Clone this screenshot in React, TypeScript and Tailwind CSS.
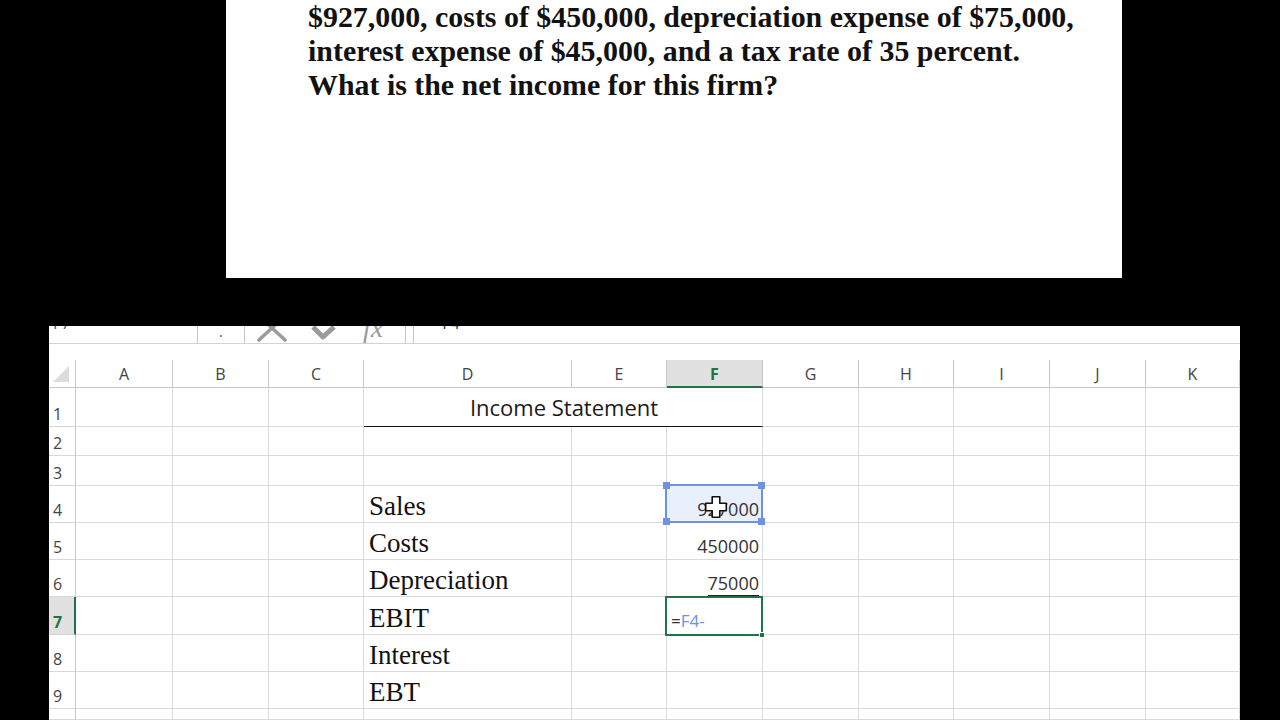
import React from 'react';

const COLS = ['A', 'B', 'C', 'D', 'E', 'F', 'G', 'H', 'I', 'J', 'K'];
const ROWS = [1, 2, 3, 4, 5, 6, 7, 8, 9, 10];

const LABELS: Record<number, string> = {
  4: 'Sales',
  5: 'Costs',
  6: 'Depreciation',
  7: 'EBIT',
  8: 'Interest',
  9: 'EBT',
};

const ui = { fontFamily: '"Open Sans", "Liberation Sans", sans-serif' };
const serif = { fontFamily: '"Liberation Serif", "Times New Roman", serif' };

function MoveCursor() {
  return (
    <svg width="26" height="26" viewBox="0 0 24 24" className="absolute left-[36px] top-[8px]">
      <path
        d="M8.5 2.5h7v6h6v7h-6v6h-7v-6h-6v-7h6z"
        fill="#fff"
        stroke="#111"
        strokeWidth="1.5"
        strokeLinejoin="round"
      />
    </svg>
  );
}

function FormulaBar() {
  return (
    <div className="flex h-[18px] border-b border-[#d2d2d2]" style={ui}>
      <div className="w-[149px] border-r border-[#c6c6c6] pl-[4px]">
        <div className="-mt-[11px] text-[16px] leading-[16px] text-[#555]">F7</div>
      </div>
      <div className="w-[46px] flex justify-center">
        <div className="mt-[9px] w-[2px] h-[2px] bg-[#888]" />
      </div>
      <div className="w-[162px] border-l border-r border-[#c6c6c6] flex items-end">
        <svg width="162" height="30" viewBox="0 0 162 30" className="-mb-[1px] shrink-0 self-end">
          <path d="M14 2 L40 26 M40 2 L14 26" stroke="#9a9a9a" strokeWidth="3.5" strokeLinecap="round" />
          <path d="M68 13 L78 23 L89 13" stroke="#9a9a9a" strokeWidth="5" fill="none" strokeLinejoin="round" />
          <text x="118" y="23" fontSize="28" fontStyle="italic" fill="#9a9a9a" fontFamily="Liberation Serif, serif">
            fx
          </text>
        </svg>
      </div>
      <div className="w-[7px]" />
      <div className="flex-1 border-l border-[#c6c6c6] pl-[19px]">
        <div className="-mt-[11px] text-[16px] leading-[16px] text-[#333]">=F4-</div>
      </div>
    </div>
  );
}

function HeaderRow() {
  return (
    <>
      <div className="border-r border-b border-[#c8c8c8] flex items-end justify-end pr-[6px] pb-[5px]">
        <svg width="16" height="16" viewBox="0 0 16 16">
          <path d="M16 0 L16 16 L0 16 Z" fill="#dcdcdc" />
        </svg>
      </div>
      {COLS.map((c) =>
        c === 'F' ? (
          <div
            key={c}
            className="bg-[#e1e1e1] border-r border-[#c8c8c8] border-b-2 border-b-[#217346] flex items-end justify-center pb-[4px] text-[16px] leading-[16px] font-bold text-[#217346]"
          >
            {c}
          </div>
        ) : (
          <div
            key={c}
            className="border-r border-b border-[#c8c8c8] flex items-end justify-center pb-[5px] text-[16px] leading-[16px] text-[#444]"
          >
            {c}
          </div>
        ),
      )}
    </>
  );
}

function RowHeader({ r }: { r: number }) {
  if (r === 7) {
    return (
      <div className="bg-[#e1e1e1] border-b border-[#d4d4d4] border-r-2 border-r-[#217346] flex items-end pl-[4px] pb-[4px] text-[16px] leading-[16px] font-bold text-[#217346]">
        {r}
      </div>
    );
  }
  return (
    <div className="border-r border-b border-[#c8c8c8] border-b-[#d8d8d8] flex items-end pl-[4px] pb-[4px] text-[16px] leading-[16px] text-[#444]">
      {r < 10 ? r : ''}
    </div>
  );
}

function Cell({ r, c }: { r: number; c: string }) {
  const base = 'border-r border-b border-[#dadada] flex items-end min-w-0';
  if (c === 'D' && LABELS[r]) {
    return (
      <div className={`${base} pl-[5px] pb-[2px]`}>
        <span className="text-[27px] leading-[27px] text-[#111] whitespace-nowrap" style={serif}>
          {LABELS[r]}
        </span>
      </div>
    );
  }
  if (c === 'F' && r === 4) {
    return (
      <div className={`${base} relative bg-[#e9effb] justify-end pr-[3px] pb-[4px]`}>
        <span className="text-[18px] leading-[18px] text-[#333]">927000</span>
        <div className="absolute -left-[2px] -top-[2px] -right-[1px] -bottom-[1px] border-2 border-[#6d92e0]">
          <div className="absolute -left-[4px] -top-[4px] w-[7px] h-[7px] bg-[#6d92e0]" />
          <div className="absolute -right-[4px] -top-[4px] w-[7px] h-[7px] bg-[#6d92e0]" />
          <div className="absolute -left-[4px] -bottom-[4px] w-[7px] h-[7px] bg-[#6d92e0]" />
          <div className="absolute -right-[4px] -bottom-[4px] w-[7px] h-[7px] bg-[#6d92e0]" />
        </div>
        <MoveCursor />
      </div>
    );
  }
  if (c === 'F' && r === 5) {
    return (
      <div className={`${base} justify-end pr-[3px] pb-[4px]`}>
        <span className="text-[18px] leading-[18px] text-[#333]">450000</span>
      </div>
    );
  }
  if (c === 'F' && r === 6) {
    return (
      <div className={`${base} justify-end pr-[3px] pb-[0px]`}>
        <span className="text-[18px] leading-[18px] text-[#333] border-b-[1.5px] border-[#222] pb-[3px]">75000</span>
      </div>
    );
  }
  if (c === 'F' && r === 7) {
    return (
      <div className={`${base} relative pl-[4px] pb-[5px]`}>
        <span className="text-[17px] leading-[17px]">
          <span className="text-[#333]">=</span>
          <span className="text-[#6d92e0]">F4-</span>
        </span>
        <div className="absolute -left-[2px] -top-[1px] -right-[1px] -bottom-[2px] border-2 border-[#217346]">
          <div className="absolute -right-[4px] -bottom-[4px] w-[6px] h-[6px] bg-[#217346] border border-white" />
        </div>
      </div>
    );
  }
  return <div className={base} />;
}

function Sheet() {
  return (
    <div
      className="grid grid-cols-[27px_97px_96px_95px_208px_95px_96px_96px_95px_96px_96px_94px] grid-rows-[28px_39px_29px_30px_37px_37px_37px_38px_37px_37px_11px]"
      style={ui}
    >
      <HeaderRow />
      {ROWS.map((r) => (
        <React.Fragment key={r}>
          <RowHeader r={r} />
          {r === 1
            ? COLS.filter((c) => c !== 'E' && c !== 'F').map((c) =>
                c === 'D' ? (
                  <div
                    key={c}
                    className="col-span-3 border-r border-[#dadada] border-b border-b-[#111] flex items-end justify-center pb-[8px]"
                  >
                    <span className="text-[22px] leading-[22px] text-[#1a1a1a] pl-[2px]">Income Statement</span>
                  </div>
                ) : (
                  <Cell key={c} r={r} c={c} />
                ),
              )
            : COLS.map((c) => <Cell key={c} r={r} c={c} />)}
        </React.Fragment>
      ))}
    </div>
  );
}

export default function App() {
  return (
    <div className="w-[1280px] h-[720px] bg-black overflow-hidden">
      <div className="ml-[226px] w-[896px] h-[278px] bg-white pl-[82px]">
        <div className="text-[29.9px] leading-[34px] font-bold text-[#111] whitespace-nowrap" style={serif}>
          <div>$927,000, costs of $450,000, depreciation expense of $75,000,</div>
          <div>interest expense of $45,000, and a tax rate of 35 percent.</div>
          <div>What is the net income for this firm?</div>
        </div>
      </div>
      <div className="ml-[49px] mt-[48px] w-[1191px] h-[394px] bg-white overflow-hidden">
        <FormulaBar />
        <div className="h-[16px]" />
        <Sheet />
      </div>
    </div>
  );
}
